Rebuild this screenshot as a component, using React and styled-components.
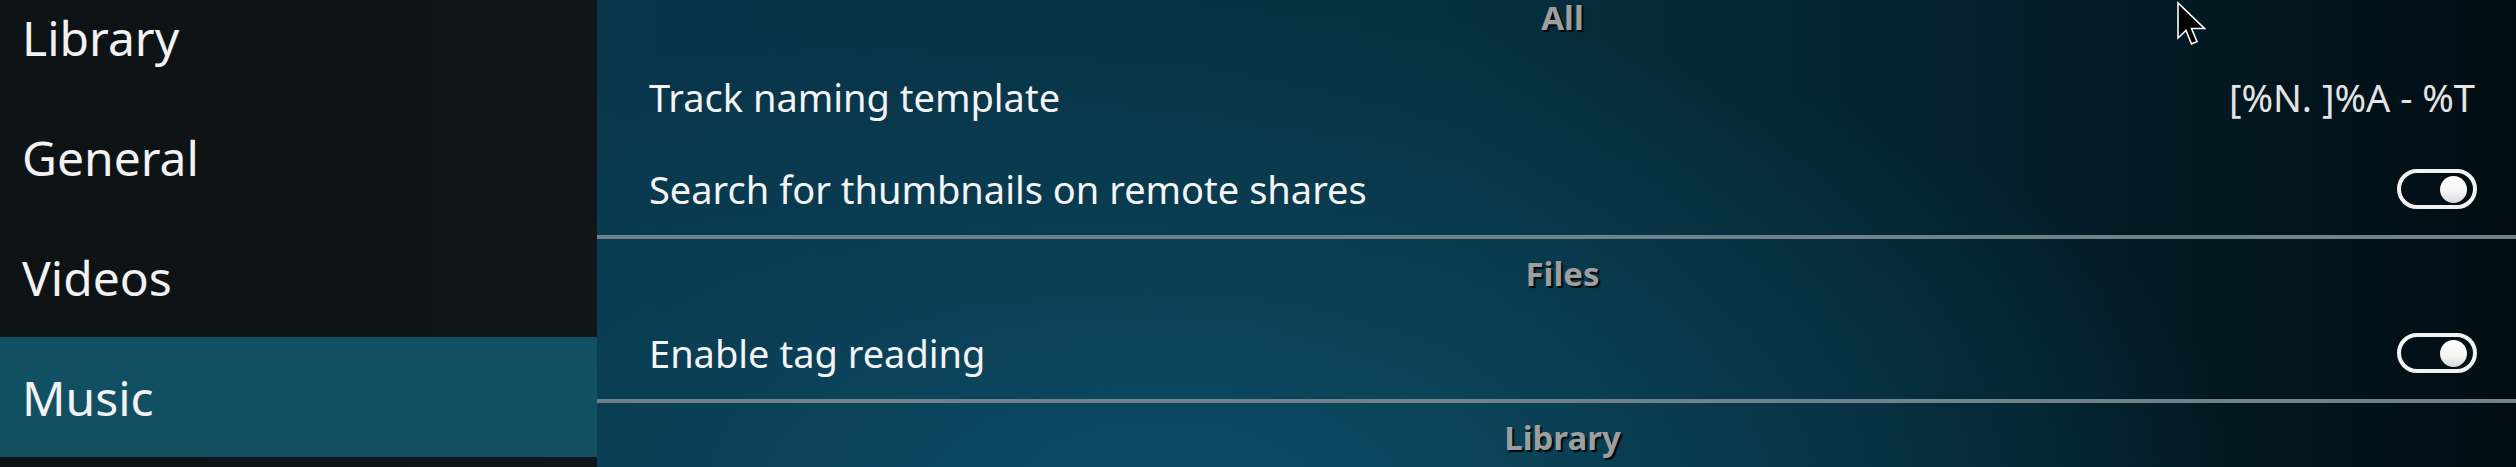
import React from "react";
import styled, { createGlobalStyle } from "styled-components";

const Global = createGlobalStyle`
  html, body { margin: 0; padding: 0; background: #0e1316; }
  body { width: 2516px; height: 467px; overflow: hidden; font-family: "Noto Sans", "Open Sans", sans-serif; }
  #root { width: 2516px; height: 467px; }
`;

const Page = styled.div`
  position: relative;
  display: flex;
  width: 2516px;
  height: 467px;
  overflow: hidden;
`;

const Sidebar = styled.nav`
  width: 597px;
  flex: 0 0 597px;
  height: 100%;
  background: linear-gradient(90deg, #0d1215 0%, #0f1518 100%);
  overflow: hidden;
`;

const SideList = styled.ul`
  list-style: none;
  margin: -23px 0 0 0;
  padding: 0;
`;

const SideItem = styled.li`
  height: 120px;
  display: flex;
  align-items: center;
  padding-left: 22px;
  font-size: 48px;
  font-weight: 400;
  color: #f2f2f2;
  background: ${(p) => (p.$active ? "#115063" : "transparent")};
`;

const Main = styled.main`
  flex: 1;
  height: 100%;
  overflow: hidden;
  background:
    radial-gradient(ellipse 75% 140% at 30% 105%, rgba(12, 78, 104, 0.95) 0%, rgba(11, 70, 94, 0.55) 40%, rgba(10, 60, 80, 0) 75%),
    linear-gradient(90deg, #08354a 0%, #07303f 45%, #04202c 72%, #010d13 100%);
`;

const List = styled.div`
  margin-top: -17px;
  display: flex;
  flex-direction: column;
`;

const GroupHeader = styled.div`
  height: 68px;
  display: flex;
  align-items: center;
  justify-content: center;
  padding-left: 12px;
  font-size: 33px;
  font-weight: 700;
  color: #9c9ea0;
  text-shadow: 2px 2px 1px rgba(0, 0, 0, 0.85);
`;

const Row = styled.div`
  height: 92px;
  display: flex;
  align-items: center;
  justify-content: space-between;
  padding: 0 39px 0 52px;
`;

const Label = styled.span`
  font-size: 38px;
  color: #f4f4f4;
`;

const Value = styled.span`
  font-size: 38px;
  color: #e4e4e4;
  padding-right: 2px;
`;

const Separator = styled.div`
  height: 4px;
  background: #6f8189;
`;

const Toggle = styled.span`
  position: relative;
  box-sizing: border-box;
  width: 80px;
  height: 40px;
  border: 4px solid #f2f2f2;
  border-radius: 20px;
  display: flex;
  align-items: center;
  justify-content: ${(p) => (p.$on ? "flex-end" : "flex-start")};
  padding: 0 6px;
`;

const Knob = styled.span`
  width: 27px;
  height: 27px;
  border-radius: 50%;
  background: linear-gradient(180deg, #ffffff 0%, #f4f4f4 60%, #d9d9d9 100%);
`;

const Cursor = styled.svg`
  position: absolute;
  left: 2176px;
  top: 1px;
  width: 32px;
  height: 48px;
  pointer-events: none;
`;

const sideItems = ["Library", "General", "Videos", "Music"];

function Switch({ on }) {
  return (
    <Toggle $on={on}>
      <Knob />
    </Toggle>
  );
}

export default function App() {
  return (
    <>
      <Global />
      <Page>
        <Sidebar>
          <SideList>
            {sideItems.map((s) => (
              <SideItem key={s} $active={s === "Music"}>
                {s}
              </SideItem>
            ))}
          </SideList>
        </Sidebar>
        <Main>
          <List>
            <GroupHeader>All</GroupHeader>
            <Row>
              <Label>Track naming template</Label>
              <Value>[%N. ]%A - %T</Value>
            </Row>
            <Row>
              <Label>Search for thumbnails on remote shares</Label>
              <Switch on />
            </Row>
            <Separator />
            <GroupHeader>Files</GroupHeader>
            <Row>
              <Label>Enable tag reading</Label>
              <Switch on />
            </Row>
            <Separator />
            <GroupHeader>Library</GroupHeader>
          </List>
        </Main>
        <Cursor viewBox="0 0 32 48">
          <path
            d="M2 2 L2 37 L10 29.5 L15.5 43 L21 40.5 L15.5 27.5 L28.5 27.5 Z"
            fill="#000"
            stroke="#fff"
            strokeWidth="1.6"
            strokeLinejoin="miter"
          />
        </Cursor>
      </Page>
    </>
  );
}
